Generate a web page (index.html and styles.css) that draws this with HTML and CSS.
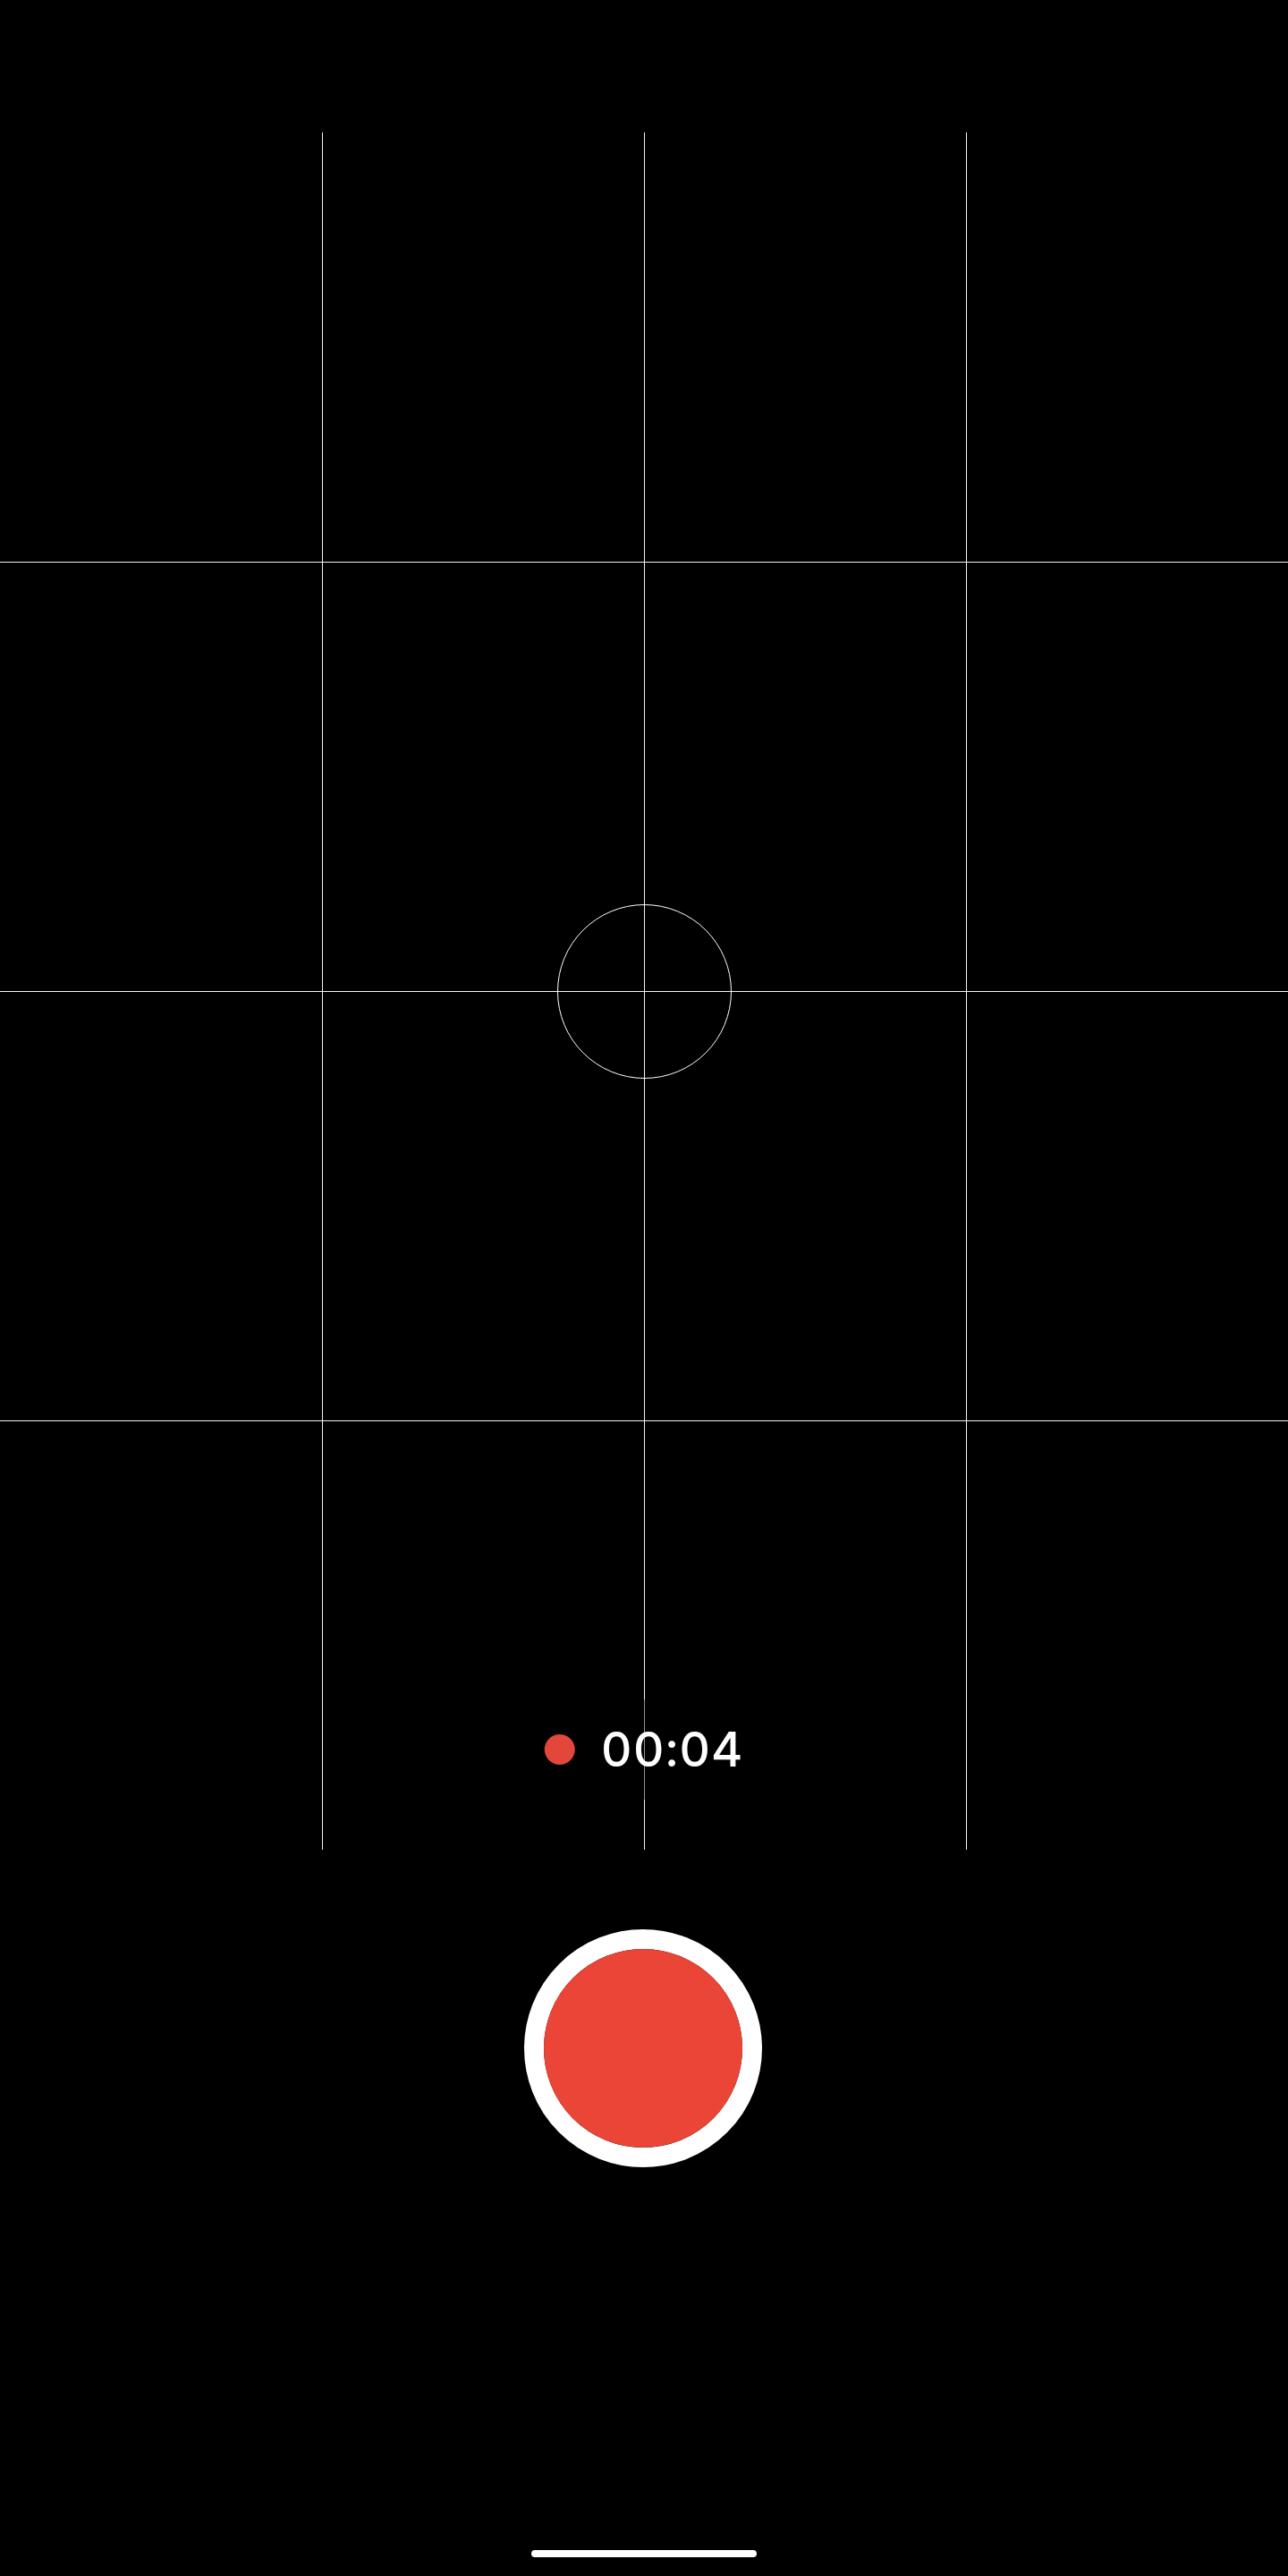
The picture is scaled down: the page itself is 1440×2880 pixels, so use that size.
FILE: index.html
```html
<!DOCTYPE html>
<html>

<head>
    <title>Camera - Recording</title>
    <meta name="viewport" content="width=device-width, initial-scale=1.0">
    <link rel="stylesheet" href="styles.css">
</head>

<body>
    <div class="screen">
        <!-- Viewfinder with the rule-of-thirds style grid -->
        <div class="viewfinder">
            <div class="grid">
                <div class="cell"></div><div class="cell"></div><div class="cell"></div><div class="cell"></div>
                <div class="cell"></div><div class="cell"></div><div class="cell"></div><div class="cell"></div>
                <div class="cell"></div><div class="cell"></div><div class="cell"></div><div class="cell"></div>
                <div class="cell"></div><div class="cell"></div><div class="cell"></div><div class="cell"></div>
            </div>

            <div class="focus-ring"></div>

            <div class="timer">
                <span class="rec-dot"></span>
                <span class="rec-time" id="rec-time">00:04</span>
            </div>
        </div>

        <div class="controls">
            <button type="button" class="shutter" id="shutter-btn">
                <span class="shutter-inner"></span>
            </button>
        </div>

        <div class="home-bar"></div>
    </div>
</body>
</html>
```

FILE: styles.css
```css
* {
    box-sizing: border-box;
}

html, body {
    margin: 0;
    padding: 0;
    background-color: #000000;
}

body {
    font-family: Inter, "Noto Sans", sans-serif;
    color: #ffffff;
}

.screen {
    width: 1440px;
    height: 2880px;
    display: flex;
    flex-direction: column;
    align-items: center;
    padding-top: 148px;
}

.viewfinder {
    position: relative;
    width: 1440px;
    height: 1920px;
}

.grid {
    display: grid;
    grid-template-columns: repeat(4, 1fr);
    grid-template-rows: repeat(4, 1fr);
    width: 100%;
    height: 100%;
}

/* lines sit on the left / top edge of every cell but the first ones */
.cell {
    border-left: 1px solid #f4f4f4;
    border-top: 1px solid #f4f4f4;
}

.cell:nth-child(4n+1) {
    border-left: none;
}

.cell:nth-child(-n+4) {
    border-top: none;
}

.focus-ring {
    position: absolute;
    left: 623px;
    top: 863px;
    width: 195px;
    height: 195px;
    border: 1.5px solid #ffffff;
    border-radius: 50%;
}

.timer {
    position: absolute;
    left: 50%;
    bottom: 56px;
    transform: translateX(-50%);
    height: 112px;
    display: flex;
    align-items: center;
    gap: 29px;
    padding: 0 44px;
    border-radius: 56px;
    background-color: rgba(0, 0, 0, 0.4);
}

.rec-dot {
    width: 34px;
    height: 34px;
    border-radius: 50%;
    background-color: #e3463a;
}

.rec-time {
    font-size: 54px;
    font-weight: 500;
    letter-spacing: 1px;
    font-variant-numeric: tabular-nums;
    line-height: 1;
}

.controls {
    margin-top: 89px;
    display: flex;
    justify-content: center;
}

.shutter {
    width: 266px;
    height: 266px;
    margin-right: 2px;
    padding: 0;
    border: 22px solid #ffffff;
    border-radius: 50%;
    background-color: #000000;
    display: flex;
    align-items: center;
    justify-content: center;
    cursor: pointer;
}

.shutter-inner {
    width: 222px;
    height: 222px;
    border-radius: 50%;
    background-color: #ea4536;
}

.home-bar {
    margin-top: auto;
    margin-bottom: 21px;
    width: 252px;
    height: 8px;
    border-radius: 4px;
    background-color: #ffffff;
}
```
